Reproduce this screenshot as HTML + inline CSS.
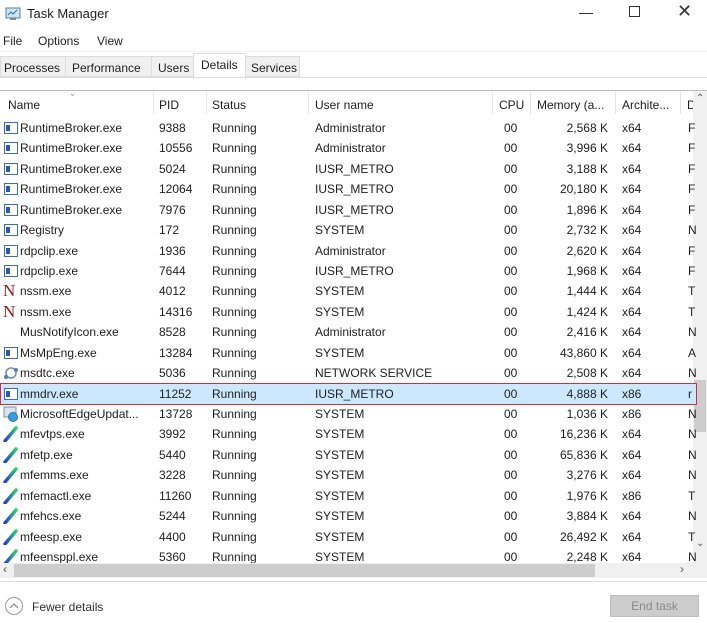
<!DOCTYPE html><html><head><style>
*{margin:0;padding:0;box-sizing:border-box}
body{width:707px;height:623px;background:#fff;font-family:"Liberation Sans",sans-serif;font-size:12px;color:#1e1e1e;position:relative;overflow:hidden}
.a{position:absolute;white-space:nowrap}
.row{position:absolute;left:0;width:693px;height:20px}
.row span{position:absolute;top:3px;white-space:nowrap}
.ic{position:absolute;left:4px;top:4px;width:14px;height:12px;border:1px solid #3a6db5;background:#fff}
.ic:after{content:"";position:absolute;left:1px;top:2px;width:4px;height:6px;background:#2b5aa8}
.sep{position:absolute;top:92px;width:1px;height:22px;background:#e5e5e5}
</style></head><body>
<svg class="a" style="left:5px;top:6px" width="16" height="16"><rect x="1" y="2" width="14" height="10" fill="#cfe3f3" stroke="#5a7fa0"/><path d="M3 9 L6 6 L8 8 L12 4" stroke="#2b6fb0" fill="none"/><rect x="5" y="12" width="6" height="2" fill="#888"/></svg>
<div class="a" style="left:27px;top:6px;font-size:13px">Task Manager</div>
<div class="a" style="left:579px;top:4px;font-size:14px">&#8212;</div>
<div class="a" style="left:629px;top:6px;width:11px;height:11px;border:1.3px solid #333"></div>
<div class="a" style="left:677px;top:1px;font-size:18px;color:#333">&#10005;</div>
<div class="a" style="left:3px;top:34px">File</div>
<div class="a" style="left:38px;top:34px">Options</div>
<div class="a" style="left:97px;top:34px">View</div>
<div class="a" style="left:0;top:51px;width:707px;height:1px;background:#f0f0f0"></div>
<div class="a" style="left:0;top:56px;width:300px;height:21px;background:#f0f0f0;border:1px solid #dcdcdc"></div>
<div class="a" style="left:4px;top:61px">Processes</div>
<div class="a" style="left:65px;top:56px;width:1px;height:21px;background:#dcdcdc"></div>
<div class="a" style="left:72px;top:61px">Performance</div>
<div class="a" style="left:151px;top:56px;width:1px;height:21px;background:#dcdcdc"></div>
<div class="a" style="left:158px;top:61px">Users</div>
<div class="a" style="left:193px;top:53px;width:53px;height:26px;background:#fff;border:1px solid #dcdcdc;border-bottom:none"></div>
<div class="a" style="left:201px;top:58px">Details</div>
<div class="a" style="left:251px;top:61px">Services</div>
<div class="a" style="left:0;top:77px;width:707px;height:1px;background:#dcdcdc"></div>
<div class="a" style="left:0;top:90px;width:707px;height:1px;background:#bdbdbd"></div>
<div class="a" style="left:69px;top:88px;font-size:9px;color:#999">&#8964;</div>
<div class="sep" style="left:153px"></div><div class="sep" style="left:206px"></div><div class="sep" style="left:308px"></div><div class="sep" style="left:492px"></div><div class="sep" style="left:530px"></div><div class="sep" style="left:615px"></div><div class="sep" style="left:680px"></div>
<div class="a" style="left:8px;top:98px">Name</div>
<div class="a" style="left:159px;top:98px">PID</div>
<div class="a" style="left:212px;top:98px">Status</div>
<div class="a" style="left:315px;top:98px">User name</div>
<div class="a" style="left:499px;top:98px">CPU</div>
<div class="a" style="left:537px;top:98px">Memory (a...</div>
<div class="a" style="left:622px;top:98px">Archite...</div>
<div class="a" style="left:687px;top:98px">D</div>
<div class="a" style="left:693px;top:91px;width:14px;height:472px;background:#f0f0f0"></div>
<div class="a" style="left:696px;top:93px;font-size:10px;color:#555">&#8963;</div>
<div class="a" style="left:694px;top:380px;width:12px;height:52px;background:#cdcdcd"></div>
<div class="a" style="left:696px;top:538px;font-size:10px;color:#555">&#8964;</div>
<div class="a" style="left:0;top:118px;width:700px;height:445px;overflow:hidden" id="t">
</div>
<div class="a" style="left:0;top:563px;width:707px;height:15px;background:#f0f0f0"></div>
<div class="a" style="left:14px;top:564px;width:581px;height:13px;background:#cdcdcd"></div>
<div class="a" style="left:3px;top:562px;font-size:12px;color:#555">&#8249;</div>
<div class="a" style="left:680px;top:562px;font-size:12px;color:#555">&#8250;</div>
<div class="a" style="left:0;top:581px;width:707px;height:1px;background:#dcdcdc"></div>
<div class="a" style="left:5px;top:597px;width:18px;height:18px;border:1px solid #999;border-radius:50%"></div>
<svg class="a" style="left:9px;top:602px" width="10" height="8"><path d="M1 6 L5 2 L9 6" stroke="#777" fill="none"/></svg>
<div class="a" style="left:32px;top:600px;color:#333">Fewer details</div>
<div class="a" style="left:610px;top:595px;width:89px;height:22px;background:#cccccc;border:1px solid #c0c0c0;color:#8a8a8a;text-align:center;line-height:20px">End task</div>
<script>
var d=[["RuntimeBroker.exe",9388,"Administrator","2,568","x64","F","b"],["RuntimeBroker.exe",10556,"Administrator","3,996","x64","F","b"],["RuntimeBroker.exe",5024,"IUSR_METRO","3,188","x64","F","b"],["RuntimeBroker.exe",12064,"IUSR_METRO","20,180","x64","F","b"],["RuntimeBroker.exe",7976,"IUSR_METRO","1,896","x64","F","b"],["Registry",172,"SYSTEM","2,732","x64","N","b"],["rdpclip.exe",1936,"Administrator","2,620","x64","F","b"],["rdpclip.exe",7644,"IUSR_METRO","1,968","x64","F","b"],["nssm.exe",4012,"SYSTEM","1,444","x64","T","n"],["nssm.exe",14316,"SYSTEM","1,424","x64","T","n"],["MusNotifyIcon.exe",8528,"Administrator","2,416","x64","N",""],["MsMpEng.exe",13284,"SYSTEM","43,860","x64","A","b"],["msdtc.exe",5036,"NETWORK SERVICE","2,508","x64","N","m"],["mmdrv.exe",11252,"IUSR_METRO","4,888","x86","r","b"],["MicrosoftEdgeUpdat...",13728,"SYSTEM","1,036","x86","N","e"],["mfevtps.exe",3992,"SYSTEM","16,236","x64","N","g"],["mfetp.exe",5440,"SYSTEM","65,836","x64","N","g"],["mfemms.exe",3228,"SYSTEM","3,276","x64","N","g"],["mfemactl.exe",11260,"SYSTEM","1,976","x86","T","g"],["mfehcs.exe",5244,"SYSTEM","3,884","x64","N","g"],["mfeesp.exe",4400,"SYSTEM","26,492","x64","T","g"],["mfeensppl.exe",5360,"SYSTEM","2,248","x64","N","g"]];
var h="";d.forEach(function(r,i){var y=i*20.43;var ic="";
if(r[6]=="b")ic='<div class="ic"></div>';
else if(r[6]=="n")ic='<span style="left:3px;top:0;font-family:Liberation Serif;font-size:17px;color:#8b1a1a">N</span>';
else if(r[6]=="g")ic='<svg style="position:absolute;left:3px;top:2px" width="16" height="16"><defs><linearGradient id="g'+i+'" x1="0" y1="1" x2="1" y2="0"><stop offset="0" stop-color="#2a3bd6"/><stop offset="1" stop-color="#2fd06a"/></linearGradient></defs><path d="M2 15 L13 2" stroke="url(#g'+i+')" stroke-width="3.5" stroke-linecap="round"/></svg>';
else if(r[6]=="m")ic='<svg style="position:absolute;left:3px;top:3px" width="16" height="14"><circle cx="8" cy="7" r="5" fill="none" stroke="#6b8fb8" stroke-width="1.5"/><circle cx="3" cy="11" r="2" fill="#5a7fa0"/><circle cx="13" cy="4" r="2" fill="#5a7fa0"/></svg>';
else if(r[6]=="e")ic='<svg style="position:absolute;left:3px;top:2px" width="16" height="16"><rect x="1" y="1" width="12" height="10" fill="#d8e4ef" stroke="#7a8fa5"/><circle cx="10" cy="11" r="4.5" fill="#3d9be0" stroke="#2a6fb0"/></svg>';
var sel=i==13;
h+='<div class="row" style="top:'+y+'px;'+(sel?'background:#cce8ff;width:697px':'')+'">'+(sel?'<div style="position:absolute;left:0;top:-1px;width:697px;height:22px;border:1.5px solid #c8323c"></div>':'')+ic+'<span style="left:20px">'+r[0]+'</span><span style="left:159px">'+r[1]+'</span><span style="left:212px">Running</span><span style="left:315px">'+r[2]+'</span><span style="left:504px">00</span><span style="left:530px;width:78px;text-align:right">'+r[3]+' K</span><span style="left:622px">'+r[4]+'</span><span style="left:688px">'+r[5]+'</span></div>';});
document.getElementById("t").innerHTML=h;
</script>
</body></html>
